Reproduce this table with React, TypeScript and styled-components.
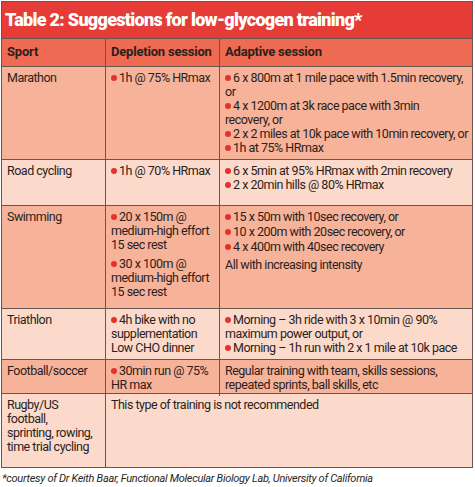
import styled, { createGlobalStyle } from "styled-components";
import { FC, ReactNode } from "react";

const GlobalStyle = createGlobalStyle`
  html, body {
    margin: 0;
    padding: 0;
    background: #ffffff;
  }
  body {
    font-family: Roboto, "Liberation Sans", Arial, sans-serif;
    color: #2b1f1c;
  }
`;

const LINE = "#6a5650";

const tones = {
  head: "#ef6a52",
  dark: "#f7b29a",
  light: "#fcdacb",
};

type Tone = keyof typeof tones;

const Page = styled.div`
  width: 475px;
  padding: 1px 2px 0 1px;
  box-sizing: border-box;
`;

const Table = styled.div`
  border: 1px solid ${LINE};
  width: 472px;
  box-sizing: border-box;
`;

const TitleBar = styled.div`
  height: 36px;
  background: #e63c37;
  color: #ffffff;
  display: flex;
  align-items: center;
  padding: 0 0 2px 3px;
  box-sizing: border-box;
  font-size: 18px;
  font-weight: 900;
  letter-spacing: -0.7px;
  white-space: nowrap;
`;

const Row = styled.div<{ $tone: Tone; $h: number }>`
  display: grid;
  grid-template-columns: 103px 114px 1fr;
  height: ${(p) => p.$h}px;
  background: ${(p) => tones[p.$tone]};
  border-top: 1px solid ${LINE};
  box-sizing: border-box;
`;

const Cell = styled.div<{ $bold?: boolean; $span?: number }>`
  padding: ${(p) => (p.$bold ? "6px 5px 0 5px" : "4px 2px 4px 5px")};
  font-size: ${(p) => (p.$bold ? "13px" : "12.5px")};
  font-weight: ${(p) => (p.$bold ? 700 : 400)};
  letter-spacing: ${(p) => (p.$bold ? "-0.2px" : "-0.5px")};
  line-height: 14px;
  white-space: nowrap;
  grid-column: ${(p) => (p.$span ? `span ${p.$span}` : "auto")};
  & + & {
    border-left: 1px solid ${LINE};
  }
`;

const Item = styled.div<{ $gap?: number }>`
  margin-top: ${(p) => p.$gap ?? 0}px;
`;

const Dot = styled.span`
  display: inline-block;
  width: 6px;
  height: 6px;
  border-radius: 50%;
  background: #e5312b;
  margin: 0 2px 1px 0;
  vertical-align: middle;
`;

const Footnote = styled.div`
  font-size: 11px;
  font-style: italic;
  letter-spacing: -0.3px;
  padding: 4px 0 0 1px;
  color: #2b1f1c;
  white-space: nowrap;
`;

const Bullet: FC<{ children: ReactNode; gap?: number }> = ({ children, gap }) => (
  <Item $gap={gap}>
    <Dot />
    {children}
  </Item>
);

export default function App() {
  return (
    <Page>
      <GlobalStyle />
      <Table>
        <TitleBar>Table 2: Suggestions for low-glycogen training*</TitleBar>

        <Row $tone="head" $h={28}>
          <Cell $bold>Sport</Cell>
          <Cell $bold>Depletion session</Cell>
          <Cell $bold>Adaptive session</Cell>
        </Row>

        <Row $tone="dark" $h={93}>
          <Cell>Marathon</Cell>
          <Cell>
            <Bullet>1h @ 75% HRmax</Bullet>
          </Cell>
          <Cell>
            <Bullet>
              6 x 800m at 1 mile pace with 1.5min recovery,
              <br />
              or
            </Bullet>
            <Bullet>
              4 x 1200m at 3k race pace with 3min
              <br />
              recovery, or
            </Bullet>
            <Bullet>2 x 2 miles at 10k pace with 10min recovery, or</Bullet>
            <Bullet>1h at 75% HRmax</Bullet>
          </Cell>
        </Row>

        <Row $tone="light" $h={46}>
          <Cell>Road cycling</Cell>
          <Cell>
            <Bullet>1h @ 70% HRmax</Bullet>
          </Cell>
          <Cell>
            <Bullet>6 x 5min at 95% HRmax with 2min recovery</Bullet>
            <Bullet>2 x 20min hills @ 80% HRmax</Bullet>
          </Cell>
        </Row>

        <Row $tone="dark" $h={103}>
          <Cell>Swimming</Cell>
          <Cell>
            <Bullet>
              20 x 150m @
              <br />
              medium-high effort
              <br />
              15 sec rest
            </Bullet>
            <Bullet gap={5}>
              30 x 100m @
              <br />
              medium-high effort
              <br />
              15 sec rest
            </Bullet>
          </Cell>
          <Cell>
            <Bullet>15 x 50m with 10sec recovery, or</Bullet>
            <Bullet gap={1}>10 x 200m with 20sec recovery, or</Bullet>
            <Bullet gap={1}>4 x 400m with 40sec recovery</Bullet>
            <Item $gap={4}>All with increasing intensity</Item>
          </Cell>
        </Row>

        <Row $tone="light" $h={51}>
          <Cell>Triathlon</Cell>
          <Cell>
            <Bullet>
              4h bike with no
              <br />
              supplementation
              <br />
              Low CHO dinner
            </Bullet>
          </Cell>
          <Cell>
            <Bullet>
              Morning – 3h ride with 3 x 10min @ 90%
              <br />
              maximum power output, or
            </Bullet>
            <Bullet>Morning – 1h run with 2 x 1 mile at 10k pace</Bullet>
          </Cell>
        </Row>

        <Row $tone="dark" $h={34}>
          <Cell>Football/soccer</Cell>
          <Cell>
            <Bullet>
              30min run @ 75%
              <br />
              HR max
            </Bullet>
          </Cell>
          <Cell>
            Regular training with team, skills sessions,
            <br />
            repeated sprints, ball skills, etc
          </Cell>
        </Row>

        <Row $tone="light" $h={74}>
          <Cell>
            Rugby/US
            <br />
            football,
            <br />
            sprinting, rowing,
            <br />
            time trial cycling
          </Cell>
          <Cell $span={2}>This type of training is not recommended</Cell>
        </Row>
      </Table>
      <Footnote>
        *courtesy of Dr Keith Baar, Functional Molecular Biology Lab, University of California
      </Footnote>
    </Page>
  );
}
